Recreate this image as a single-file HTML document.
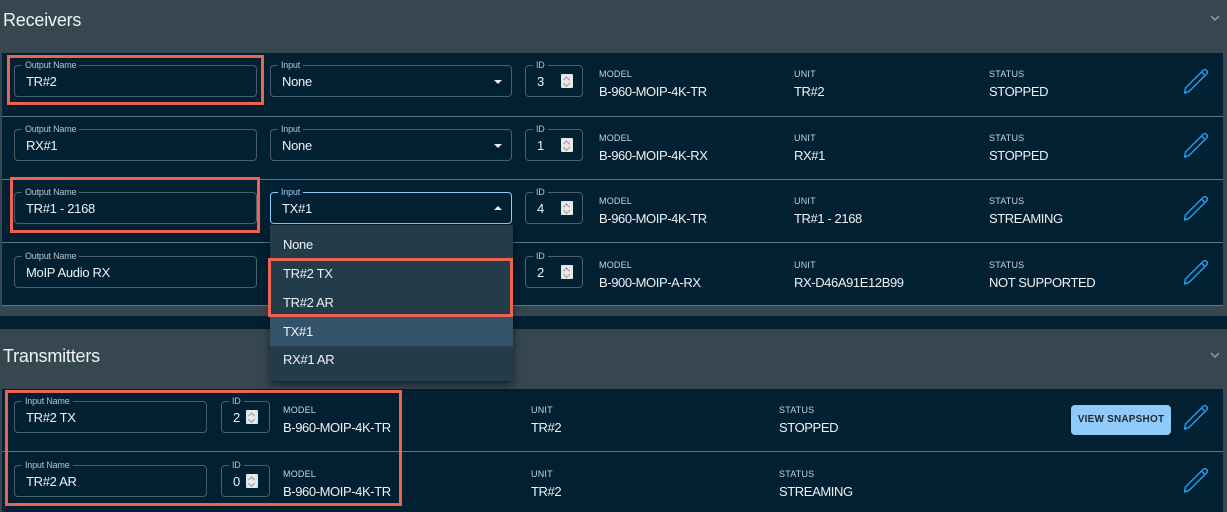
<!DOCTYPE html>
<html><head><meta charset="utf-8"><style>
*{margin:0;padding:0;box-sizing:border-box}
body{width:1227px;height:512px;overflow:hidden;background:#37474f;font-family:"Liberation Sans",sans-serif;color:#e8eef2;position:relative}
.a{position:absolute}
.h{font-size:18px;color:#eef3f5;letter-spacing:-.2px}
.panel{position:absolute;left:2px;width:1221px;background:#012032}
.div{position:absolute;left:2px;width:1221px;height:1px;background:#5b7886}
.fld{position:absolute;border:1px solid #4a5f6a;border-radius:4px;height:32px}
.fld .lb{position:absolute;top:-7px;left:7px;font-size:9px;color:#b7c3c9;background:#012032;padding:0 3px;line-height:12px;letter-spacing:-.2px}
.fld .v{position:absolute;left:11px;top:8px;font-size:13px;color:#eef2f4;letter-spacing:-.3px}
.sp{position:absolute;width:12px;height:14px;background:#e6e8ea;top:8px;border-radius:1px}
.sp:before{content:"";position:absolute;left:3px;top:2px;width:4px;height:4px;border-left:1px solid #999;border-top:1px solid #999;transform:rotate(45deg) translate(1px,1px)}
.sp:after{content:"";position:absolute;left:3px;top:7px;width:4px;height:4px;border-right:1px solid #999;border-bottom:1px solid #999;transform:rotate(45deg)}
.k{position:absolute;font-size:9px;color:#c9d3d8;letter-spacing:.2px}
.val{position:absolute;font-size:13px;color:#eef2f4;letter-spacing:-.4px}
.red{position:absolute;border:3px solid #ef6253}
.tri{position:absolute;width:0;height:0;border-left:4px solid transparent;border-right:4px solid transparent}
.menu{position:absolute;left:270px;top:225px;width:243px;height:156px;background:#233c49;box-shadow:0 4px 8px rgba(0,0,0,.5)}
.mi{position:absolute;left:13px;font-size:13px;color:#eef2f4;letter-spacing:-.3px}
</style></head><body>
<div class="a h" style="left:3px;top:10px">Receivers</div>
<svg class="a" style="left:1210px;top:15px" width="10" height="7"><path d="M1 1l4 4 4-4" stroke="#8aa0ad" stroke-width="1.5" fill="none"/></svg>

<div class="panel" style="top:53px;height:252px"></div>
<div class="div" style="top:116px"></div>
<div class="div" style="top:179px"></div>
<div class="div" style="top:242px"></div>
<div class="div" style="top:305px"></div>
<div class="a" style="left:0;top:316px;width:1227px;height:13px;background:#012032"></div>

<div class="fld" style="left:14px;top:65px;width:243px"><span class="lb">Output Name</span><span class="v">TR#2</span></div>
<div class="fld" style="left:270px;top:65px;width:242px"><span class="lb">Input</span><span class="v">None</span><div class="tri" style="left:223px;top:14px;border-top:4px solid #eee"></div></div>
<div class="fld" style="left:525px;top:65px;width:58px"><span class="lb">ID</span><span class="v">3</span><div class="sp" style="left:35px"></div></div>
<div class="k" style="left:599px;top:69px">MODEL</div><div class="val" style="left:599px;top:84px">B-960-MOIP-4K-TR</div>
<div class="k" style="left:794px;top:69px">UNIT</div><div class="val" style="left:794px;top:84px">TR#2</div>
<div class="k" style="left:989px;top:69px">STATUS</div><div class="val" style="left:989px;top:84px">STOPPED</div>

<div class="fld" style="left:14px;top:129px;width:243px"><span class="lb">Output Name</span><span class="v">RX#1</span></div>
<div class="fld" style="left:270px;top:129px;width:242px"><span class="lb">Input</span><span class="v">None</span><div class="tri" style="left:223px;top:14px;border-top:4px solid #eee"></div></div>
<div class="fld" style="left:525px;top:129px;width:58px"><span class="lb">ID</span><span class="v">1</span><div class="sp" style="left:35px"></div></div>
<div class="k" style="left:599px;top:133px">MODEL</div><div class="val" style="left:599px;top:148px">B-960-MOIP-4K-RX</div>
<div class="k" style="left:794px;top:133px">UNIT</div><div class="val" style="left:794px;top:148px">RX#1</div>
<div class="k" style="left:989px;top:133px">STATUS</div><div class="val" style="left:989px;top:148px">STOPPED</div>

<div class="fld" style="left:14px;top:192px;width:243px"><span class="lb">Output Name</span><span class="v">TR#1 - 2168</span></div>
<div class="fld" style="left:270px;top:192px;width:242px;border-color:#90caf9"><span class="lb" style="color:#90caf9">Input</span><span class="v">TX#1</span><div class="tri" style="left:223px;top:13px;border-bottom:4px solid #eee"></div></div>
<div class="fld" style="left:525px;top:192px;width:58px"><span class="lb">ID</span><span class="v">4</span><div class="sp" style="left:35px"></div></div>
<div class="k" style="left:599px;top:196px">MODEL</div><div class="val" style="left:599px;top:211px">B-960-MOIP-4K-TR</div>
<div class="k" style="left:794px;top:196px">UNIT</div><div class="val" style="left:794px;top:211px">TR#1 - 2168</div>
<div class="k" style="left:989px;top:196px">STATUS</div><div class="val" style="left:989px;top:211px">STREAMING</div>

<div class="fld" style="left:14px;top:256px;width:243px"><span class="lb">Output Name</span><span class="v">MoIP Audio RX</span></div>
<div class="fld" style="left:525px;top:256px;width:58px"><span class="lb">ID</span><span class="v">2</span><div class="sp" style="left:35px"></div></div>
<div class="k" style="left:599px;top:260px">MODEL</div><div class="val" style="left:599px;top:275px">B-900-MOIP-A-RX</div>
<div class="k" style="left:794px;top:260px">UNIT</div><div class="val" style="left:794px;top:275px">RX-D46A91E12B99</div>
<div class="k" style="left:989px;top:260px">STATUS</div><div class="val" style="left:989px;top:275px">NOT SUPPORTED</div>

<div class="a h" style="left:3px;top:346px">Transmitters</div>
<svg class="a" style="left:1210px;top:352px" width="10" height="7"><path d="M1 1l4 4 4-4" stroke="#8aa0ad" stroke-width="1.5" fill="none"/></svg>
<div class="panel" style="top:389px;height:123px"></div>
<div class="div" style="top:451px"></div>
<div class="fld" style="left:14px;top:401px;width:193px"><span class="lb">Input Name</span><span class="v">TR#2 TX</span></div>
<div class="fld" style="left:221px;top:401px;width:49px"><span class="lb">ID</span><span class="v">2</span><div class="sp" style="left:24px"></div></div>
<div class="k" style="left:283px;top:405px">MODEL</div><div class="val" style="left:283px;top:420px">B-960-MOIP-4K-TR</div>
<div class="k" style="left:531px;top:405px">UNIT</div><div class="val" style="left:531px;top:420px">TR#2</div>
<div class="k" style="left:779px;top:405px">STATUS</div><div class="val" style="left:779px;top:420px">STOPPED</div>
<div class="a" style="left:1071px;top:405px;width:100px;height:30px;background:#90caf9;border-radius:4px;color:#1b2a33;font-size:10px;font-weight:bold;text-align:center;line-height:30px;letter-spacing:.2px">VIEW SNAPSHOT</div>
<div class="fld" style="left:14px;top:465px;width:193px"><span class="lb">Input Name</span><span class="v">TR#2 AR</span></div>
<div class="fld" style="left:221px;top:465px;width:49px"><span class="lb">ID</span><span class="v">0</span><div class="sp" style="left:24px"></div></div>
<div class="k" style="left:283px;top:469px">MODEL</div><div class="val" style="left:283px;top:484px">B-960-MOIP-4K-TR</div>
<div class="k" style="left:531px;top:469px">UNIT</div><div class="val" style="left:531px;top:484px">TR#2</div>
<div class="k" style="left:779px;top:469px">STATUS</div><div class="val" style="left:779px;top:484px">STREAMING</div>

<svg class="a" style="left:0;top:0" width="1227" height="512">
<defs><path id="pen" d="M1.5 26 L2.5 21 L20 3.5 Q22 1.8 23.6 3.4 Q25.2 5 23.5 7 L6 24.5 Z M18.5 5 L22 8.5" fill="none" stroke="#1e9bea" stroke-width="1.5" stroke-linejoin="round"/></defs>
<use href="#pen" x="1183" y="67"/><use href="#pen" x="1183" y="131"/><use href="#pen" x="1183" y="194"/><use href="#pen" x="1183" y="258"/>
<use href="#pen" x="1183" y="403"/><use href="#pen" x="1183" y="466"/>
</svg>

<div class="menu">
<div class="a" style="left:0;top:92px;width:243px;height:29px;background:#33536a"></div>
<div class="mi" style="top:12px">None</div>
<div class="mi" style="top:41px">TR#2 TX</div>
<div class="mi" style="top:70px">TR#2 AR</div>
<div class="mi" style="top:99px">TX#1</div>
<div class="mi" style="top:127px">RX#1 AR</div>
</div>

<div class="red" style="left:7px;top:55px;width:257px;height:50px"></div>
<div class="red" style="left:10px;top:177px;width:250px;height:56px"></div>
<div class="red" style="left:268px;top:258px;width:245px;height:59px"></div>
<div class="red" style="left:5px;top:390px;width:397px;height:116px"></div>
</body></html>
